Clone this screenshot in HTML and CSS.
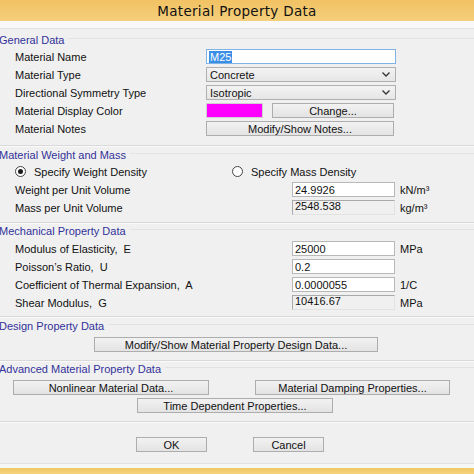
FILE: index.html
```html
<!DOCTYPE html>
<html>
<head>
<meta charset="utf-8">
<link rel="stylesheet" href="styles.css">
</head>
<body>
<div class="dialog">
  <div class="titlebar">Material Property Data</div>
  <div class="band"></div>

  <div class="section s-general">
    <div class="hdr">General Data</div>
    <div class="rows">
      <div class="row">
        <span class="lbl lbl-wide">Material Name</span>
        <div class="field focus"><span class="sel">M25</span></div>
      </div>
      <div class="row">
        <span class="lbl lbl-wide">Material Type</span>
        <div class="combo"><span>Concrete</span><svg class="chev" width="8" height="5" viewBox="0 0 8 5"><polyline points="0.5,0.5 4,4 7.5,0.5" fill="none" stroke="#333" stroke-width="1.3"/></svg></div>
      </div>
      <div class="row">
        <span class="lbl lbl-wide">Directional Symmetry Type</span>
        <div class="combo"><span>Isotropic</span><svg class="chev" width="8" height="5" viewBox="0 0 8 5"><polyline points="0.5,0.5 4,4 7.5,0.5" fill="none" stroke="#333" stroke-width="1.3"/></svg></div>
      </div>
      <div class="row">
        <span class="lbl lbl-wide">Material Display Color</span>
        <div class="swatch"></div>
        <div class="btn btn-change">Change...</div>
      </div>
      <div class="row">
        <span class="lbl lbl-wide">Material Notes</span>
        <div class="btn btn-notes">Modify/Show Notes...</div>
      </div>
    </div>
  </div>

  <div class="section s-weight">
    <div class="hdr">Material Weight and Mass</div>
    <div class="rows">
      <div class="row">
        <div class="radio-opt first"><span class="radio on"></span><span>Specify Weight Density</span></div>
        <div class="radio-opt"><span class="radio"></span><span>Specify Mass Density</span></div>
      </div>
      <div class="row">
        <span class="lbl lbl-num">Weight per Unit Volume</span>
        <div class="num">24.9926</div>
        <span class="unit">kN/m³</span>
      </div>
      <div class="row">
        <span class="lbl lbl-num">Mass per Unit Volume</span>
        <div class="num disabled">2548.538</div>
        <span class="unit">kg/m³</span>
      </div>
    </div>
  </div>

  <div class="section s-mech">
    <div class="hdr">Mechanical Property Data</div>
    <div class="rows">
      <div class="row">
        <span class="lbl lbl-num">Modulus of Elasticity,&nbsp; E</span>
        <div class="num">25000</div>
        <span class="unit">MPa</span>
      </div>
      <div class="row">
        <span class="lbl lbl-num">Poisson’s Ratio,&nbsp; U</span>
        <div class="num">0.2</div>
      </div>
      <div class="row">
        <span class="lbl lbl-num">Coefficient of Thermal Expansion,&nbsp; A</span>
        <div class="num">0.0000055</div>
        <span class="unit">1/C</span>
      </div>
      <div class="row">
        <span class="lbl lbl-num">Shear Modulus,&nbsp; G</span>
        <div class="num disabled">10416.67</div>
        <span class="unit">MPa</span>
      </div>
    </div>
  </div>

  <div class="section s-design">
    <div class="hdr">Design Property Data</div>
    <div class="btnrow design-row">
      <div class="btn btn-design">Modify/Show Material Property Design Data...</div>
    </div>
  </div>

  <div class="section s-adv">
    <div class="hdr">Advanced Material Property Data</div>
    <div class="btnrow adv-row1">
      <div class="btn btn-adv">Nonlinear Material Data...</div>
      <div class="btn btn-adv2">Material Damping Properties...</div>
    </div>
    <div class="btnrow adv-row2">
      <div class="btn btn-adv">Time Dependent Properties...</div>
    </div>
  </div>

  <div class="section s-footer">
    <div class="btnrow foot-row">
      <div class="btn btn-ok">OK</div>
      <div class="btn btn-ok">Cancel</div>
    </div>
  </div>
  <div class="band2"></div>
  <div class="bottombar"></div>
</div>
</body>
</html>
```

FILE: styles.css
```css
* { box-sizing: border-box; }
html, body { margin: 0; padding: 0; }
body {
  width: 474px;
  height: 474px;
  overflow: hidden;
  background: #f0f0f0;
  font-family: "Liberation Sans", Arial, sans-serif;
  font-size: 11px;
  color: #111;
}
.dialog { width: 474px; height: 474px; display: flex; flex-direction: column; }

.titlebar {
  height: 21px;
  flex: none;
  background: linear-gradient(#f1c263, #f5cf7c);
  font-family: "DejaVu Sans", sans-serif;
  font-size: 13.5px;
  letter-spacing: 0.3px;
  color: #111;
  display: flex;
  align-items: center;
  justify-content: center;
  padding-top: 1px;
}
.band {
  height: 8px;
  flex: none;
  background: #f8f8f8;
  border-bottom: 1px solid #e2e2e2;
}

.section {
  flex: none;
  border-bottom: 1px solid #d9d9d9;
  box-shadow: 0 1px 0 #fafafa;
  display: flex;
  flex-direction: column;
}
.s-general { height: 117px; padding-top: 4px; }
.s-weight { height: 77px; padding-top: 2px; }
.s-mech { height: 94px; padding-top: 1px; }
.s-design { height: 44px; padding-top: 2px; }
.s-adv { height: 61px; padding-top: 1px; }
.s-footer { height: 42px; padding-top: 15px; border-bottom-color: #e0e0e0; }

.hdr {
  height: 14px;
  line-height: 14px;
  color: #32329a;
  display: flex;
  white-space: nowrap;
  margin-left: -1px;
}
.hdr::after {
  content: "";
  flex: 1;
  height: 1px;
  margin-top: 5px;
  margin-left: 4px;
  background: #e3e3e3;
}

.rows { display: flex; flex-direction: column; gap: 3px; }
.s-general .rows { margin-top: 2px; }
.s-weight .rows { margin-top: 2px; }
.s-mech .rows { margin-top: 3px; }

.row {
  height: 15px;
  display: flex;
  align-items: center;
  padding-left: 15px;
  white-space: nowrap;
}
.lbl { flex: none; }
.lbl-wide { width: 191px; }
.lbl-num { width: 277px; }

.field {
  width: 190px;
  height: 15px;
  background: #fff;
  border: 1px solid #b8b8b8;
  display: flex;
  align-items: center;
  padding-left: 2px;
}
.field.focus { border-color: #7fb2e5; }
.sel {
  background: #3a8ee6;
  color: #fff;
  padding: 0 1px;
  line-height: 12px;
}

.combo {
  width: 190px;
  height: 15px;
  background: linear-gradient(#f3f3f3, #e6e6e6);
  border: 1px solid #b0b0b0;
  display: flex;
  align-items: center;
  justify-content: space-between;
  padding: 0 5px 0 3px;
}
.chev { display: block; }

.swatch {
  width: 57px;
  height: 15px;
  background: #ff00ff;
  border: 1px solid #d0d0d0;
  flex: none;
}

.btn {
  height: 15px;
  background: linear-gradient(#f2f2f2, #e3e3e3);
  border: 1px solid #adadad;
  display: flex;
  align-items: center;
  justify-content: center;
  white-space: nowrap;
  flex: none;
}
.btn-change { width: 122px; margin-left: 9px; }
.btn-notes { width: 188px; }

.radio-opt { display: flex; align-items: center; gap: 8px; }
.radio-opt.first { width: 217px; }
.radio {
  width: 11px;
  height: 11px;
  border-radius: 50%;
  border: 1px solid #444;
  background: #fff;
  display: flex;
  align-items: center;
  justify-content: center;
}
.radio.on::after {
  content: "";
  width: 5px;
  height: 5px;
  border-radius: 50%;
  background: #1a1a1a;
}

.num {
  width: 103px;
  height: 15px;
  background: #fff;
  border: 1px solid #b8b8b8;
  padding-left: 2px;
  display: flex;
  align-items: center;
  flex: none;
}
.num.disabled {
  background: #f0f0f0;
  border-color: #a9a9a9 #e2e2e2 #e2e2e2 #a9a9a9;
  align-items: flex-start;
  line-height: 11px;
}
.unit { margin-left: 5px; }

.btnrow { display: flex; }
.design-row { margin-top: 4px; padding-left: 94px; }
.btn-design { width: 284px; }
.adv-row1 { margin-top: 4px; padding-left: 13px; gap: 46px; }
.adv-row2 { margin-top: 3px; padding-left: 137px; }
.btn-adv { width: 196px; }
.btn-adv2 { width: 195px; }
.foot-row { padding-left: 136px; gap: 46px; }
.btn-ok { width: 71px; }

.band2 { height: 4px; flex: none; background: #f6f6f6; }
.bottombar { flex: 1; background: linear-gradient(#f0c965, #f5d27c); }
```
